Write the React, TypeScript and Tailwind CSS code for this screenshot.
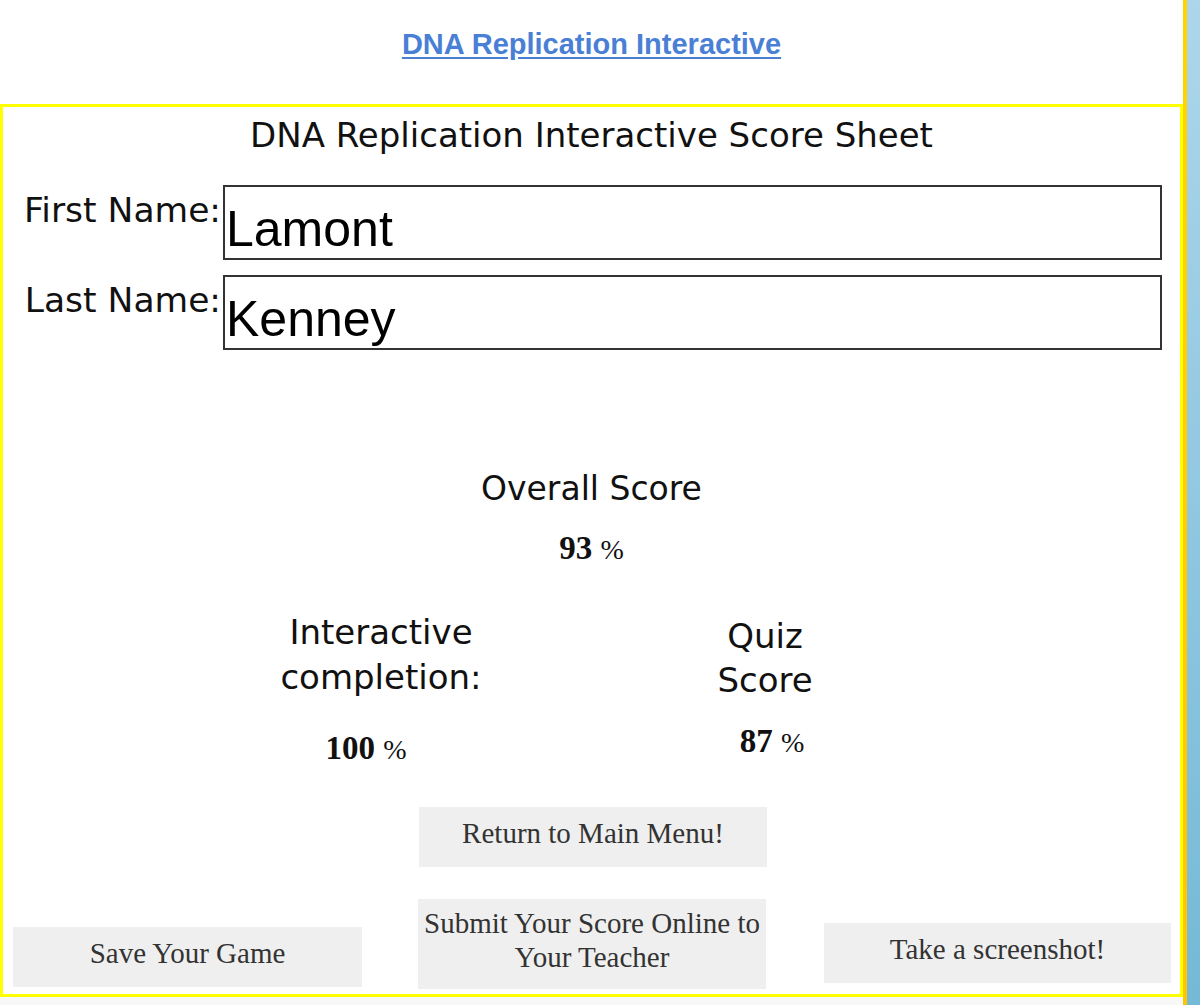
import React from 'react';

const sans = { fontFamily: '"DejaVu Sans", Verdana, sans-serif' };

function GreyButton({ children, className }: { children: React.ReactNode; className?: string }) {
  return (
    <button
      className={`flex items-center justify-center bg-[#efefef] text-[#333] text-[29px] leading-[34px] text-center pb-[9px] ${className ?? ''}`}
      style={{ fontFamily: '"Liberation Serif", "Times New Roman", serif' }}
    >
      {children}
    </button>
  );
}

function Percent({ value, className }: { value: string; className?: string }) {
  return (
    <div
      className={`text-[33px] leading-[36px] font-bold text-[#111] ${className ?? ''}`}
      style={{ fontFamily: '"Liberation Serif", "Times New Roman", serif' }}
    >
      {value} <span className="text-[28px] font-normal">%</span>
    </div>
  );
}

function NameRow({ label, value }: { label: string; value: string }) {
  return (
    <div className="flex items-start">
      <div className="w-[218px] text-right text-[34.5px] leading-[40px] pt-[5px] text-[#111]" style={sans}>
        {label}
      </div>
      <div className="ml-[2px] w-[939px] h-[75px] border-2 border-[#333] pl-[1px] pt-[17px]">
        <span
          className="text-[50px] leading-none text-black"
          style={{ fontFamily: '"Liberation Sans", Arial, sans-serif' }}
        >
          {value}
        </span>
      </div>
    </div>
  );
}

export default function App() {
  return (
    <div className="w-[1200px] h-[1005px] flex bg-white overflow-hidden">
      <div className="w-[1183px] flex flex-col">
        {/* header link */}
        <div className="h-[104px] flex justify-center pt-[26px]">
          <a
            href="#"
            className="text-[29px] leading-[36px] font-bold text-[#4a7fd6] underline underline-offset-[3px]"
            style={{ fontFamily: '"Liberation Sans", Arial, sans-serif' }}
          >
            DNA Replication Interactive
          </a>
        </div>

        {/* score sheet */}
        <div className="h-[893px] border-[3px] border-[#ffff00] bg-white flex flex-col">
          <h1 className="mt-[8px] text-center text-[34px] leading-[40px] text-[#111]" style={sans}>
            DNA Replication Interactive Score Sheet
          </h1>

          <div className="mt-[30px] flex flex-col gap-[15px]">
            <NameRow label="First Name:" value="Lamont" />
            <NameRow label="Last Name:" value="Kenney" />
          </div>

          <div className="mt-[119px] text-center text-[33px] leading-[40px] text-[#111]" style={sans}>
            Overall Score
          </div>
          <Percent value="93" className="mt-[21px] text-center" />

          <div className="flex items-start ml-[258px] mt-[42px]">
            <div className="w-[240px] flex flex-col items-center">
              <div className="text-center text-[34px] leading-[45px] text-[#111]" style={sans}>
                Interactive
                <br />
                completion:
              </div>
              <Percent value="100" className="mt-[30px] pr-[30px]" />
            </div>
            <div className="ml-[164px] w-[200px] flex flex-col items-center mt-[4px]">
              <div className="text-center text-[34px] leading-[44px] text-[#111]" style={sans}>
                Quiz
                <br />
                Score
              </div>
              <Percent value="87" className="mt-[21px] pl-[14px]" />
            </div>
          </div>

          <GreyButton className="mt-[39px] self-center ml-[3px] w-[348px] h-[60px]">Return to Main Menu!</GreyButton>

          <div className="mt-[32px] pl-[10px] flex items-start">
            <GreyButton className="mt-[28px] w-[349px] h-[60px]">Save Your Game</GreyButton>
            <GreyButton className="ml-[56px] w-[348px] h-[90px]">
              Submit Your Score Online to
              <br />
              Your Teacher
            </GreyButton>
            <GreyButton className="ml-[58px] mt-[24px] w-[347px] h-[60px]">Take a screenshot!</GreyButton>
          </div>
        </div>

        <div className="flex-1 bg-[#f8f8f8]" />
      </div>
      <div className="w-[4px] bg-gradient-to-b from-[#ffd400] to-[#ffc400]" />
      <div className="flex-1 bg-gradient-to-b from-[#add6ea] to-[#74b9d6]" />
    </div>
  );
}
